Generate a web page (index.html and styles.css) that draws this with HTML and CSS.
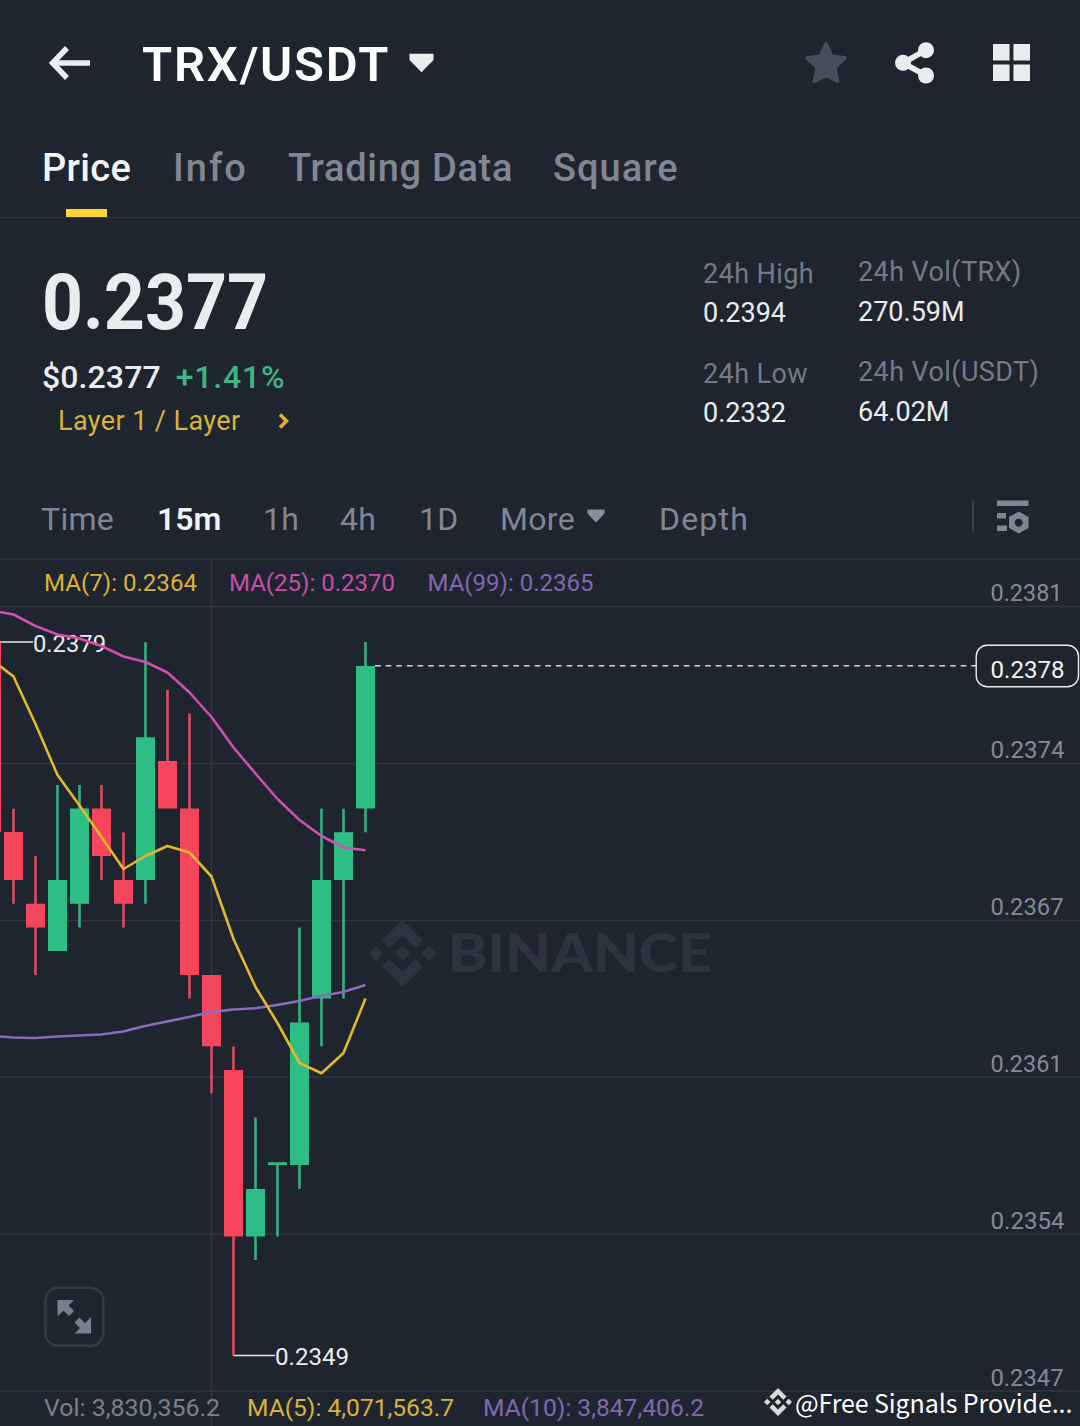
FILE: index.html
```html
<!DOCTYPE html>
<html lang="en">
  <head>
    <meta charset="utf-8">
    <title>TRX/USDT</title>
    <link rel="stylesheet" href="styles.css">
  </head>
<body>
<div class="app">

  <header class="topbar">
    <svg class="back" viewBox="0 0 42 34"><path d="M41 17H5M18 2L3.500 17L18 32" fill="none" stroke="#eaecef" stroke-width="5.500"/></svg>
    <h1>TRX/USDT</h1>
    <svg class="caret" viewBox="0 0 26 20"><path d="M0.500 0.500H25.500V7L13 19.500L0.500 7Z" fill="#eaecef"/></svg>
    <div class="actions">
      <svg class="star" viewBox="0 0 42 42"><path d="M21 2L26.500 14.500L39.500 16L29.500 25.500L32.500 39L21 33.500L9.500 39L12.500 25.500L2.500 16L15.500 14.500Z" fill="#474d5c" stroke="#474d5c" stroke-width="4" stroke-linejoin="round"/></svg>
      <svg class="share" viewBox="0 0 40 42"><path d="M31 8L8 21L31 33.500" fill="none" stroke="#eaecef" stroke-width="5.500"/><g fill="#eaecef"><circle cx="31" cy="8.200" r="8"/><circle cx="8" cy="20.800" r="8"/><circle cx="31" cy="33.500" r="8"/></g></svg>
      <svg class="grid-icon" viewBox="0 0 38 38"><path d="M0 0H17V17H0ZM21 0H38V17H21ZM0 21H17V38H0ZM21 21H38V38H21Z" fill="#eaecef"/></svg>
    </div>
  </header>

  <nav class="tabs">
    <a class="tab tab-price active">Price</a>
    <a class="tab tab-info">Info</a>
    <a class="tab tab-data">Trading Data</a>
    <a class="tab tab-square">Square</a>
  </nav>

  <section class="ticker">
    <div class="quote">
      <div class="last">0.2377</div>
      <div class="sub"><span class="usd">$0.2377</span><span class="change">+1.41%</span></div>
      <div class="tag"><span>Layer 1 / Layer</span>
        <svg viewBox="0 0 12 16"><path d="M2 1.500L8.500 8L2 14.500" fill="none" stroke="#e0b030" stroke-width="3.600"/></svg>
      </div>
    </div>
    <div class="stats">
      <div class="stat-col">
        <div class="stat"><label>24h High</label><b>0.2394</b></div>
        <div class="stat"><label>24h Low</label><b>0.2332</b></div>
      </div>
      <div class="stat-col wide">
        <div class="stat"><label>24h Vol(TRX)</label><b>270.59M</b></div>
        <div class="stat"><label>24h Vol(USDT)</label><b>64.02M</b></div>
      </div>
    </div>
  </section>

  <nav class="intervals">
    <a class="i-time">Time</a>
    <a class="i-15m active">15m</a>
    <a class="i-1h">1h</a>
    <a class="i-4h">4h</a>
    <a class="i-1d">1D</a>
    <a class="i-more">More</a>
    <svg class="more-caret" viewBox="0 0 18 14"><path d="M0.500 0.500H17.500V4.500L9 13.500L0.500 4.500Z" fill="#848e9c"/></svg>
    <a class="i-depth">Depth</a>
    <span class="divider"></span>
    <svg class="settings" viewBox="0 0 32 34"><g fill="#7f8794"><path d="M0 0.500H31.500V6H0ZM0 13H9V18.500H0ZM0 25.500H10V31H0Z"/><path fill-rule="evenodd" d="M21.700 11.500L31.500 17V28L21.700 33.500L12 28V17ZM21.700 18.700a4 4 0 1 0 0.010 0Z"/></g></svg>
  </nav>

  <main class="chart">
    <svg class="plot" viewBox="0 560 1080 866">
      <!-- grid -->
      <path class="grid" d="M0 606.500H1080M0 763.500H1080M0 920.500H1080M0 1077H1080M0 1234H1080M0 1391H1080M211.500 560V1426"/>

      <!-- watermark -->
      <g class="mark">
        <path d="M402.500 920L423 940.500L415.500 948L402.500 935.500L389.500 948L382 940.500ZM402.500 987L382 966.500L389.500 959L402.500 971.500L415.500 959L423 966.500ZM402.500 946L410 953.500L402.500 961L395 953.500ZM376 946L383.500 953.500L376 961L368.500 953.500ZM429 946L436.500 953.500L429 961L421.500 953.500Z"/>
        <text x="448" y="972" textLength="264" lengthAdjust="spacingAndGlyphs">BINANCE</text>
      </g>

      <text class="mark-label" x="33" y="652" textLength="73" lengthAdjust="spacingAndGlyphs">0.2379</text>
      <path class="leader" d="M0 642H33M233 1355.500H275"/>

      <!-- falling candles -->
      <g class="down">
        <path class="wick" d="M13.500 808.700V903.800M35.500 856V975M101.500 785V880M123.500 832.500V927.500M167.500 690V808M189.500 713.500V998.500M211.500 975V1093.500M233.500 1046.500V1355.500"/>
        <path d="M-18 642H1V832H-18ZM4 832H23V880H4ZM26 903.700H45V927.500H26ZM92 808.600H111V856H92ZM114 880H133V903.800H114ZM158 761H177V808.600H158ZM180 808.600H199V975H180ZM202 975H221V1046.300H202ZM224 1070H243V1236.500H224Z"/>
      </g>

      <!-- rising candles -->
      <g class="up">
        <path class="wick" d="M57.500 785V951M79.500 785V927.500M145.500 642.300V903.800M255.500 1117.500V1260M277.500 1163V1236.500M299.500 927.500V1188.800M321.500 808.700V1046.300M343.500 808.700V998.500M365.500 642V832.300"/>
        <path d="M48 880H67V951H48ZM70 808.600H89V903.800H70ZM136 737.300H155V880H136ZM246 1189H265V1236.500H246ZM268 1162.300H287V1165H268ZM290 1022.500H309V1165H290ZM312 880H331V998.500H312ZM334 832.300H353V880H334ZM356 666H375V808.500H356Z"/>
      </g>

      <!-- moving averages -->
      <polyline class="ma ma99" points="0,1036.500 13,1037.500 35,1038 57,1036.500 101,1034.500 123,1031.500 145,1026 167,1021.500 189,1017 211,1012 233,1009.500 255,1008.300 277,1005 299,1001 321,996 343,992 365.500,985"/>
      <polyline class="ma ma25" points="0,612 13.500,614.500 35.500,626 57.500,634.500 79.500,638.500 101.500,646 123.500,656.500 145.500,662 167.500,672.500 189.500,692.500 211.500,717 233.500,747.500 255.500,773.500 277.500,799 299.500,820 321.500,836 343.500,847.500 365.500,850.300"/>
      <polyline class="ma ma7" points="0,666 13.500,676.500 35.500,724 57.500,775 79.500,805.500 101.500,837 123.500,869 145.500,856 167.500,846 189.500,852.500 211.500,876.500 233.500,939 255.500,987 277.500,1023 299.500,1063 321.500,1073.300 343.500,1053 365.500,998.500"/>

      <!-- last price -->
      <path class="last-line" d="M375 665.700H976"/>
      <rect class="last-box" x="976.200" y="645.200" width="102.300" height="41.600" rx="11"/>
      <text class="last-text" x="990.500" y="678.300" textLength="74" lengthAdjust="spacingAndGlyphs">0.2378</text>

      <g class="axis">
        <text x="990.500" y="601" textLength="72" lengthAdjust="spacingAndGlyphs">0.2381</text>
        <text x="990.500" y="758" textLength="74" lengthAdjust="spacingAndGlyphs">0.2374</text>
        <text x="990.500" y="915" textLength="73" lengthAdjust="spacingAndGlyphs">0.2367</text>
        <text x="990.500" y="1072" textLength="72" lengthAdjust="spacingAndGlyphs">0.2361</text>
        <text x="990.500" y="1229" textLength="74" lengthAdjust="spacingAndGlyphs">0.2354</text>
        <text x="990.500" y="1386" textLength="73" lengthAdjust="spacingAndGlyphs">0.2347</text>
      </g>
      <text class="mark-label" x="275" y="1365" textLength="74" lengthAdjust="spacingAndGlyphs">0.2349</text>

      <g class="legend">
        <text class="c7" x="44" y="591" textLength="153" lengthAdjust="spacingAndGlyphs">MA(7): 0.2364</text>
        <text class="c25" x="229" y="591" textLength="166" lengthAdjust="spacingAndGlyphs">MA(25): 0.2370</text>
        <text class="c99" x="427.500" y="591" textLength="166" lengthAdjust="spacingAndGlyphs">MA(99): 0.2365</text>
        <text class="vol" x="44" y="1416" textLength="176" lengthAdjust="spacingAndGlyphs">Vol: 3,830,356.2</text>
        <text class="c7" x="247" y="1416" textLength="207" lengthAdjust="spacingAndGlyphs">MA(5): 4,071,563.7</text>
        <text class="c99" x="483" y="1416" textLength="221" lengthAdjust="spacingAndGlyphs">MA(10): 3,847,406.2</text>
      </g>

      <!-- fullscreen button -->
      <g class="expand">
        <rect x="45.300" y="1287.800" width="58" height="58" rx="13"/>
        <path d="M57.500 1300H74L68.500 1305.500L74 1311L69 1316L63.500 1310.500L57.500 1316.500ZM91 1333.500H74.500L80 1328L74.500 1322.500L79.500 1317.500L85 1323L91 1317Z"/>
      </g>
    </svg>

    <div class="credit">
      <svg viewBox="0 0 28 28"><path d="M14 0L22.500 8.500L19.300 11.700L14 6.500L8.700 11.700L5.500 8.500ZM14 28L5.500 19.500L8.700 16.300L14 21.500L19.300 16.300L22.500 19.500ZM14 10.800L17.200 14L14 17.200L10.800 14ZM3.200 10.800L6.400 14L3.200 17.200L0 14ZM24.800 10.800L28 14L24.800 17.200L21.600 14Z" fill="#d9d9dc"/></svg>
      <span>@Free Signals Provide...</span>
    </div>
  </main>

</div>
</body>
</html>
```
FILE: styles.css
```css
* {
  box-sizing: border-box;
}

body {
  margin: 0;
  background: #1f252f;
  color: #eaecef;
  font-family: Roboto, "Liberation Sans", sans-serif;
}

.app {
  width: 1080px;
  height: 1426px;
  overflow: hidden;
}

svg {
  display: block;
  flex: none;
}

/* top bar */
.topbar {
  display: flex;
  align-items: center;
  height: 125px;
  padding: 0 50px 0 49px;
}

.back {
  width: 42px;
  height: 34px;
}

h1 {
  margin: 5px 0 0 51px;
  width: 267px;
  font-size: 49px;
  line-height: 60px;
  font-weight: 600;
  letter-spacing: 1.8px;
  white-space: nowrap;
  color: #fff;
}

.caret {
  width: 25px;
  height: 20px;
}

.actions {
  display: flex;
  align-items: center;
  margin-left: auto;
}

.star {
  width: 42px;
  height: 42px;
}

.share {
  width: 40px;
  height: 42px;
  margin-left: 48px;
}

.grid-icon {
  width: 37px;
  height: 37px;
  margin-left: 58px;
}

/* tabs */
.tabs {
  display: flex;
  height: 93px;
  padding: 18px 0 0 42px;
  border-bottom: 1px solid #2f3642;
  font-size: 38px;
  line-height: 50px;
  font-weight: 500;
  letter-spacing: 0.7px;
  color: #7f8794;
}

.tab {
  position: relative;
  white-space: nowrap;
}

.tab.active {
  letter-spacing: 0.3px;
  color: #f2f3f6;
}

.tab.active::after {
  content: "";
  position: absolute;
  left: 24px;
  bottom: 0;
  width: 41px;
  height: 8px;
  background: #fcd535;
}

.tab-price { width: 131px; }
.tab-info {
  width: 115px;
  letter-spacing: 2px;
}
.tab-data { width: 265px; }
.tab-square { letter-spacing: 1px; }

/* price block */
.ticker {
  display: flex;
  justify-content: space-between;
  height: 262px;
  padding: 34px 0 0 42px;
}

.last {
  padding-top: 3px;
  font-size: 77px;
  line-height: 97px;
  font-weight: 700;
  transform: scaleX(0.93);
  transform-origin: 0 0;
}

.sub {
  display: flex;
  gap: 15px;
  font-size: 32px;
  line-height: 51px;
  font-weight: 500;
  letter-spacing: 0.1px;
}

.change {
  letter-spacing: 0.8px;
  color: #3fb487;
}

.tag {
  display: flex;
  align-items: center;
  gap: 37px;
  padding-left: 16px;
  font-size: 27px;
  line-height: 36px;
  letter-spacing: 0.4px;
  color: #d9b23c;
}

.tag svg {
  width: 12px;
  height: 16px;
}

.stats {
  display: flex;
}

.stat-col {
  width: 155px;
  padding-top: 3px;
}

.stat-col.wide {
  width: 222px;
  padding-top: 0;
}

.stat {
  height: 100px;
  font-size: 27px;
  line-height: 39px;
}

.wide .stat {
  line-height: 40px;
}

.stat label {
  display: block;
  letter-spacing: 0.4px;
  color: #737b88;
  white-space: nowrap;
}

.stat b {
  display: block;
  font-weight: 400;
}

/* interval row */
.intervals {
  display: flex;
  align-items: center;
  height: 80px;
  padding-left: 41px;
  border-bottom: 2px solid #2a313c;
  font-size: 32px;
  line-height: 40px;
  letter-spacing: 0.3px;
  color: #7f8794;
}

.intervals .active {
  color: #f2f3f6;
  font-weight: 600;
  letter-spacing: 0;
}

.i-time { width: 116px; }
.i-15m { width: 106px; }
.i-1h { width: 77px; }
.i-4h { width: 79px; }
.i-1d { width: 81px; }
.i-more { width: 87px; }

.more-caret {
  width: 18px;
  height: 14px;
  margin-bottom: 6px;
}

.i-depth {
  width: 313px;
  margin-left: 54px;
  letter-spacing: 1.2px;
}

.divider {
  width: 2px;
  height: 33px;
  margin-bottom: 5px;
  background: #373e4b;
}

.settings {
  width: 32px;
  height: 34px;
  margin: 0 0 4px 23px;
}

/* chart */
.chart {
  position: relative;
  height: 866px;
}

.plot {
  width: 1080px;
  height: 866px;
}

.plot text {
  font-size: 24px;
}

.grid {
  fill: none;
  stroke: #303742;
  stroke-width: 1.5;
}

.mark {
  fill: #2d343f;
}

.plot .mark text {
  font-family: Lato, sans-serif;
  font-size: 53px;
  font-weight: 900;
}

.leader {
  fill: none;
  stroke: #e4e6ea;
  stroke-width: 1.5;
}

.mark-label {
  fill: #eaecef;
}

.wick {
  fill: none;
  stroke-width: 2.6;
}

.down { fill: #f6465d; }
.down .wick { stroke: #dc4c61; }
.up { fill: #2ebd85; }
.up .wick { stroke: #38ae80; }

.ma {
  fill: none;
  stroke-width: 2.6;
  stroke-linejoin: round;
}

.ma7 { stroke: #e3b829; }
.ma25 { stroke: #ce4fae; }
.ma99 { stroke: #8b6bbd; }

.last-line {
  stroke: #d5d8dd;
  stroke-width: 1.6;
  stroke-dasharray: 5.6 5.05;
}

.last-box {
  fill: #1f252f;
  stroke: #eaecef;
  stroke-width: 1.4;
}

.last-text {
  fill: #f2f3f6;
}

.axis { fill: #848b98; }
.c7 { fill: #dab238; }
.c25 { fill: #c650a8; }
.c99 { fill: #8267b0; }
.vol { fill: #79818e; }

.expand rect {
  fill: none;
  stroke: #343b47;
  stroke-width: 2.5;
}

.expand path {
  fill: #78808e;
}

/* author credit over the chart */
.credit {
  position: absolute;
  left: 764px;
  top: 828px;
  display: flex;
  align-items: center;
  gap: 3px;
  white-space: nowrap;
  color: #fff;
  font: 25px/28px "Noto Sans CJK SC", "Noto Sans", sans-serif;
  letter-spacing: -0.1px;
}

.credit svg {
  width: 28px;
  height: 28px;
}
```
